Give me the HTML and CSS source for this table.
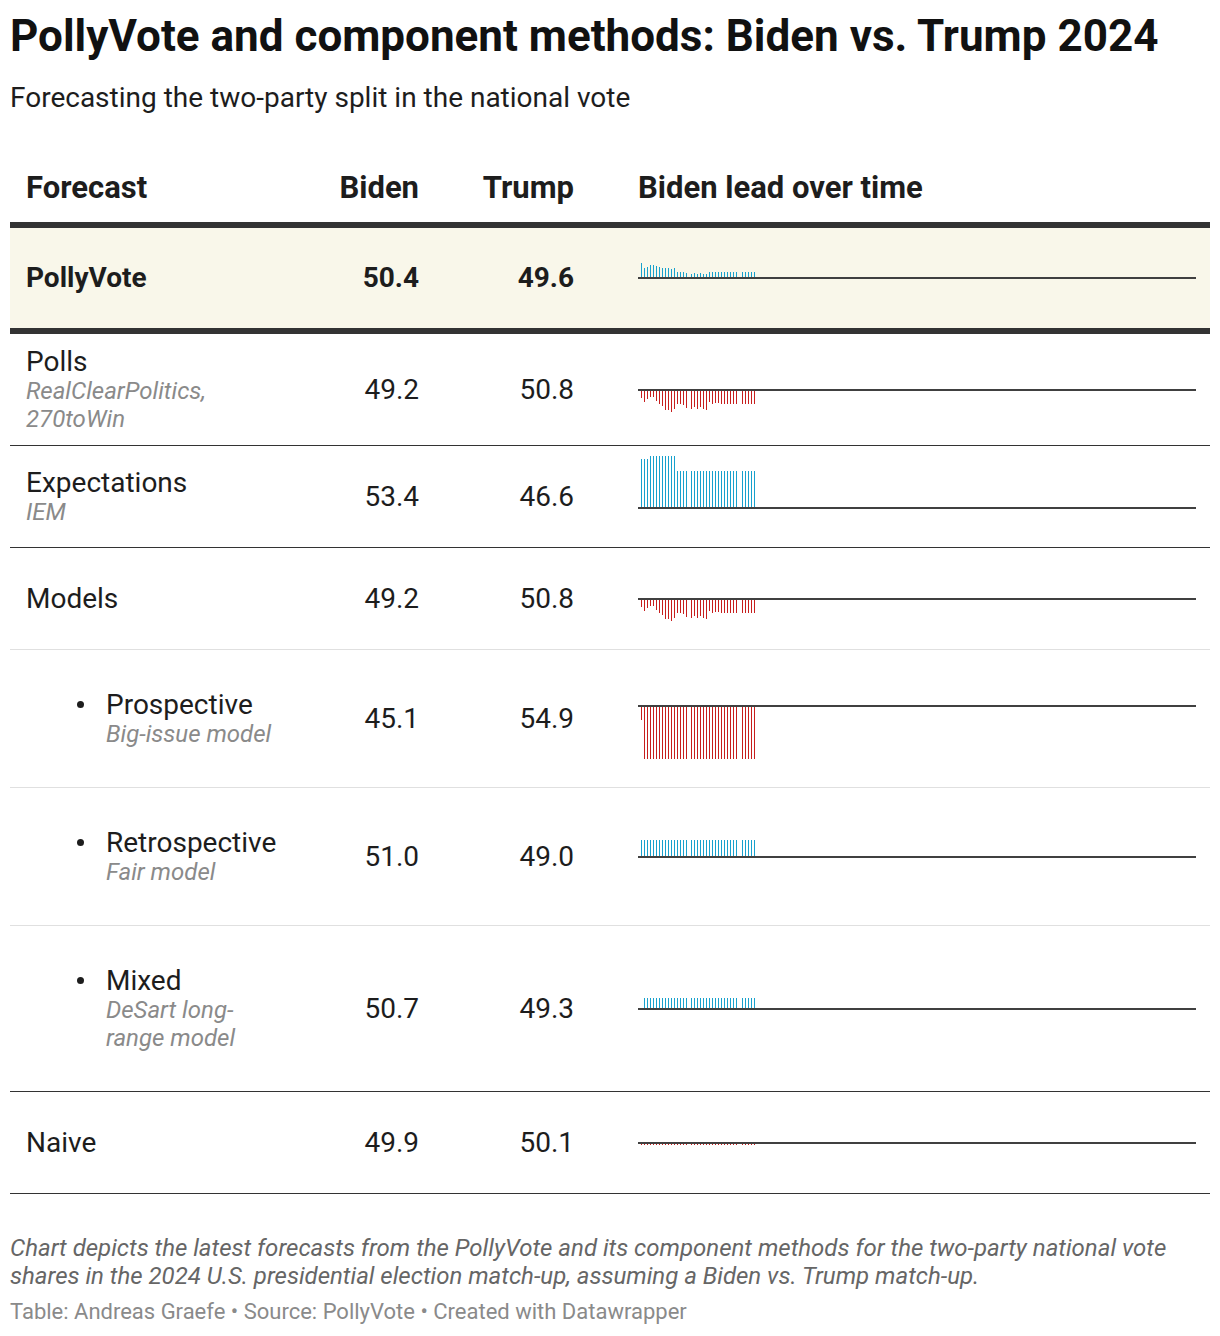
FILE: index.html
```html
<!DOCTYPE html>
<html lang="en">
<head>
<meta charset="utf-8">
<title>PollyVote and component methods</title>
<link rel="stylesheet" href="styles.css">
</head>
<body>
<div class="chart">
  <h1 class="title">PollyVote and component methods: Biden vs. Trump 2024</h1>
  <p class="subtitle">Forecasting the two-party split in the national vote</p>

  <div class="table">
    <div class="row head">
      <div class="cell label">Forecast</div>
      <div class="cell num">Biden</div>
      <div class="cell num">Trump</div>
      <div class="cell spark">Biden lead over time</div>
    </div>

    <div class="row hl">
      <div class="cell label"><div class="main bold">PollyVote</div></div>
      <div class="cell num bold">50.4</div>
      <div class="cell num bold">49.6</div>
      <div class="cell spark">
        <svg class="sparkline" viewBox="0 -1 558 76" width="558" height="76">
          <path class="bar-up" d="M3.5 36v-14M6.5 36v-9M9.5 36v-10M12.5 36v-12M15.5 36v-12M18.5 36v-11M21.5 36v-10M24.5 36v-9M27.5 36v-9M30.5 36v-9M33.5 36v-8M36.5 36v-9M39.5 36v-5M42.5 36v-5M45.5 36v-5M48.5 36v-4M53.5 36v-3M56.5 36v-4M59.5 36v-3M62.5 36v-4M65.5 36v-3M68.5 36v-3M71.5 36v-5M74.5 36v-5M77.5 36v-5M80.5 36v-5M83.5 36v-5M86.5 36v-5M89.5 36v-5M92.5 36v-5M95.5 36v-5M98.5 36v-5M104.5 36v-5M107.5 36v-5M110.5 36v-5M113.5 36v-5M116.5 36v-5"/>
          <rect class="axis" x="0" y="36" width="558" height="2"/>
        </svg>
      </div>
    </div>

    <div class="row dark">
      <div class="cell label">
        <div class="main">Polls</div>
        <div class="sub">RealClearPolitics,<br>270toWin</div>
      </div>
      <div class="cell num">49.2</div>
      <div class="cell num">50.8</div>
      <div class="cell spark">
        <svg class="sparkline" viewBox="0 -1 558 76" width="558" height="76">
          <path class="bar-down" d="M3.5 38v7M6.5 38v11M9.5 38v8M12.5 38v6M15.5 38v6M18.5 38v10M21.5 38v13M24.5 38v15M27.5 38v19M30.5 38v19M33.5 38v21M36.5 38v18M39.5 38v13M42.5 38v13M45.5 38v14M48.5 38v17M53.5 38v18M56.5 38v16M59.5 38v18M62.5 38v16M65.5 38v18M68.5 38v19M71.5 38v11M74.5 38v13M77.5 38v12M80.5 38v12M83.5 38v13M86.5 38v13M89.5 38v13M92.5 38v13M95.5 38v13M98.5 38v13M104.5 38v13M107.5 38v13M110.5 38v13M113.5 38v13M116.5 38v13"/>
          <rect class="axis" x="0" y="36" width="558" height="2"/>
        </svg>
      </div>
    </div>

    <div class="row dark">
      <div class="cell label">
        <div class="main">Expectations</div>
        <div class="sub">IEM</div>
      </div>
      <div class="cell num">53.4</div>
      <div class="cell num">46.6</div>
      <div class="cell spark">
        <svg class="sparkline" viewBox="0 -1 558 76" width="558" height="76">
          <path class="bar-up" d="M3.5 47v-48M6.5 47v-48M9.5 47v-48M12.5 47v-51M15.5 47v-51M18.5 47v-51M21.5 47v-51M24.5 47v-51M27.5 47v-51M30.5 47v-51M33.5 47v-51M36.5 47v-51M39.5 47v-36M42.5 47v-36M45.5 47v-36M48.5 47v-36M53.5 47v-36M56.5 47v-36M59.5 47v-36M62.5 47v-36M65.5 47v-36M68.5 47v-36M71.5 47v-36M74.5 47v-36M77.5 47v-36M80.5 47v-36M83.5 47v-36M86.5 47v-36M89.5 47v-36M92.5 47v-36M95.5 47v-36M98.5 47v-36M104.5 47v-36M107.5 47v-36M110.5 47v-36M113.5 47v-36M116.5 47v-36"/>
          <rect class="axis" x="0" y="47" width="558" height="2"/>
        </svg>
      </div>
    </div>

    <div class="row light">
      <div class="cell label"><div class="main">Models</div></div>
      <div class="cell num">49.2</div>
      <div class="cell num">50.8</div>
      <div class="cell spark">
        <svg class="sparkline" viewBox="0 -1 558 76" width="558" height="76">
          <path class="bar-down" d="M3.5 38v7M6.5 38v11M9.5 38v8M12.5 38v6M15.5 38v6M18.5 38v10M21.5 38v13M24.5 38v15M27.5 38v19M30.5 38v19M33.5 38v21M36.5 38v18M39.5 38v13M42.5 38v13M45.5 38v14M48.5 38v17M53.5 38v18M56.5 38v16M59.5 38v18M62.5 38v16M65.5 38v18M68.5 38v19M71.5 38v11M74.5 38v13M77.5 38v12M80.5 38v12M83.5 38v13M86.5 38v13M89.5 38v13M92.5 38v13M95.5 38v13M98.5 38v13M104.5 38v13M107.5 38v13M110.5 38v13M113.5 38v13M116.5 38v13"/>
          <rect class="axis" x="0" y="36" width="558" height="2"/>
        </svg>
      </div>
    </div>

    <div class="row light">
      <div class="cell label">
        <ul class="bullets">
          <li><div class="main">Prospective</div><div class="sub">Big-issue model</div></li>
        </ul>
      </div>
      <div class="cell num">45.1</div>
      <div class="cell num">54.9</div>
      <div class="cell spark">
        <svg class="sparkline" viewBox="0 -1 558 76" width="558" height="76">
          <path class="bar-down" d="M3.5 25v13M6.5 25v52M9.5 25v52M12.5 25v52M15.5 25v52M18.5 25v52M21.5 25v52M24.5 25v52M27.5 25v52M30.5 25v52M33.5 25v52M36.5 25v52M39.5 25v52M42.5 25v52M45.5 25v52M48.5 25v52M53.5 25v52M56.5 25v52M59.5 25v52M62.5 25v52M65.5 25v52M68.5 25v52M71.5 25v52M74.5 25v52M77.5 25v52M80.5 25v52M83.5 25v52M86.5 25v52M89.5 25v52M92.5 25v52M95.5 25v52M98.5 25v52M104.5 25v52M107.5 25v52M110.5 25v52M113.5 25v52M116.5 25v52"/>
          <rect class="axis" x="0" y="23" width="558" height="2"/>
        </svg>
      </div>
    </div>

    <div class="row light">
      <div class="cell label">
        <ul class="bullets">
          <li><div class="main">Retrospective</div><div class="sub">Fair model</div></li>
        </ul>
      </div>
      <div class="cell num">51.0</div>
      <div class="cell num">49.0</div>
      <div class="cell spark">
        <svg class="sparkline" viewBox="0 -1 558 76" width="558" height="76">
          <path class="bar-up" d="M3.5 36v-16M6.5 36v-16M9.5 36v-16M12.5 36v-16M15.5 36v-16M18.5 36v-16M21.5 36v-16M24.5 36v-16M27.5 36v-16M30.5 36v-16M33.5 36v-16M36.5 36v-16M39.5 36v-16M42.5 36v-16M45.5 36v-16M48.5 36v-16M53.5 36v-16M56.5 36v-16M59.5 36v-16M62.5 36v-16M65.5 36v-16M68.5 36v-16M71.5 36v-16M74.5 36v-16M77.5 36v-16M80.5 36v-16M83.5 36v-16M86.5 36v-16M89.5 36v-16M92.5 36v-16M95.5 36v-16M98.5 36v-16M104.5 36v-16M107.5 36v-16M110.5 36v-16M113.5 36v-16M116.5 36v-16"/>
          <rect class="axis" x="0" y="36" width="558" height="2"/>
        </svg>
      </div>
    </div>

    <div class="row dark">
      <div class="cell label">
        <ul class="bullets">
          <li><div class="main">Mixed</div><div class="sub">DeSart long-<br>range model</div></li>
        </ul>
      </div>
      <div class="cell num">50.7</div>
      <div class="cell num">49.3</div>
      <div class="cell spark">
        <svg class="sparkline" viewBox="0 -1 558 76" width="558" height="76">
          <path class="bar-up" d="M6.5 36v-10M9.5 36v-10M12.5 36v-10M15.5 36v-10M18.5 36v-10M21.5 36v-10M24.5 36v-10M27.5 36v-10M30.5 36v-10M33.5 36v-10M36.5 36v-10M39.5 36v-10M42.5 36v-10M45.5 36v-10M48.5 36v-10M53.5 36v-10M56.5 36v-10M59.5 36v-10M62.5 36v-10M65.5 36v-10M68.5 36v-10M71.5 36v-10M74.5 36v-10M77.5 36v-10M80.5 36v-10M83.5 36v-10M86.5 36v-10M89.5 36v-10M92.5 36v-10M95.5 36v-10M98.5 36v-10M104.5 36v-10M107.5 36v-10M110.5 36v-10M113.5 36v-10M116.5 36v-10"/>
          <rect class="axis" x="0" y="36" width="558" height="2"/>
        </svg>
      </div>
    </div>

    <div class="row dark">
      <div class="cell label"><div class="main">Naive</div></div>
      <div class="cell num">49.9</div>
      <div class="cell num">50.1</div>
      <div class="cell spark">
        <svg class="sparkline" viewBox="0 -1 558 76" width="558" height="76">
          <path class="bar-down" d="M3.5 38v1M6.5 38v1M9.5 38v1M12.5 38v1M15.5 38v1M18.5 38v1M21.5 38v1M24.5 38v1M27.5 38v1M30.5 38v1M33.5 38v1M36.5 38v1M39.5 38v1M42.5 38v1M45.5 38v1M48.5 38v1M53.5 38v1M56.5 38v1M59.5 38v1M62.5 38v1M65.5 38v1M68.5 38v1M71.5 38v1M74.5 38v1M77.5 38v1M80.5 38v1M83.5 38v1M86.5 38v1M89.5 38v1M92.5 38v1M95.5 38v1M98.5 38v1M104.5 38v1M107.5 38v1M110.5 38v1M113.5 38v1M116.5 38v1"/>
          <rect class="axis" x="0" y="36" width="558" height="2"/>
        </svg>
      </div>
    </div>
  </div>

  <p class="notes">Chart depicts the latest forecasts from the PollyVote and its component methods for the two-party national vote shares in the 2024 U.S. presidential election match-up, assuming a Biden vs. Trump match-up.</p>
  <p class="credits">Table: Andreas Graefe • Source: PollyVote • Created with Datawrapper</p>
</div>
</body>
</html>
```

FILE: styles.css
```css
html, body {
  margin: 0;
  padding: 0;
  background: #ffffff;
}

body {
  font-family: Roboto, "Noto Sans", "Liberation Sans", sans-serif;
  color: #1d1d1d;
}

.chart {
  padding: 11px 10px 0 10px;
}

.title {
  margin: 0;
  font-size: 44px;
  line-height: 50px;
  font-weight: 700;
  color: #111111;
}

.subtitle {
  margin: 21px 0 0 0;
  font-size: 28px;
  line-height: 32px;
  font-weight: 400;
  color: #1d1d1d;
}

.table {
  margin-top: 57px;
}

.row {
  display: grid;
  grid-template-columns: 290px 127px 155px 1fr;
  align-items: center;
  padding: 12.5px 0;
  border-bottom: 1px solid #333333;
}

.row.head {
  align-items: end;
  padding: 0 0 17px 0;
  border-bottom: 6px solid #333333;
  font-size: 31px;
  line-height: 34px;
  font-weight: 700;
}

.row.hl {
  background: #f9f7ea;
  padding: 12px 0;
  border-bottom: 6px solid #333333;
}

.row.dark {
  border-bottom-color: #333333;
}

.row.light {
  border-bottom-color: #e0e0e0;
}

.cell {
  min-width: 0;
}

.label {
  padding-left: 16px;
}

.num {
  text-align: right;
  padding-right: 8px;
  font-size: 28px;
  line-height: 30px;
}

.head .num {
  font-size: 31px;
  line-height: 34px;
}

.spark {
  padding-left: 56px;
  padding-right: 14px;
  display: flex;
  align-items: center;
}

.sparkline {
  display: block;
  overflow: visible;
}

.axis {
  fill: #404040;
}

.bar-up {
  stroke: #18a1cd;
  stroke-width: 1;
  fill: none;
}

.bar-down {
  stroke: #c71e1d;
  stroke-width: 1;
  fill: none;
}

.main {
  font-size: 28px;
  line-height: 30px;
}

.bold {
  font-weight: 700;
}

.sub {
  font-size: 24px;
  line-height: 28px;
  font-style: italic;
  color: #8a8a8a;
}

.bullets {
  list-style: none;
  margin: 27px 0;
  padding: 0 0 0 51px;
}

.bullets li {
  display: grid;
  grid-template-columns: 29px auto;
}

.bullets li::before {
  content: "";
  grid-row: 1;
  grid-column: 1;
  align-self: center;
  justify-self: start;
  width: 7px;
  height: 7px;
  border-radius: 50%;
  background: #1d1d1d;
}

.bullets li .main {
  grid-column: 2;
  grid-row: 1;
}

.bullets li .sub {
  grid-column: 2;
  grid-row: 2;
}

.notes {
  margin: 40px 0 0 0;
  font-size: 24px;
  line-height: 28px;
  font-style: italic;
  color: #666666;
}

.credits {
  margin: 8px 0 0 0;
  font-size: 22px;
  line-height: 28px;
  color: #8a8a8a;
}
```
